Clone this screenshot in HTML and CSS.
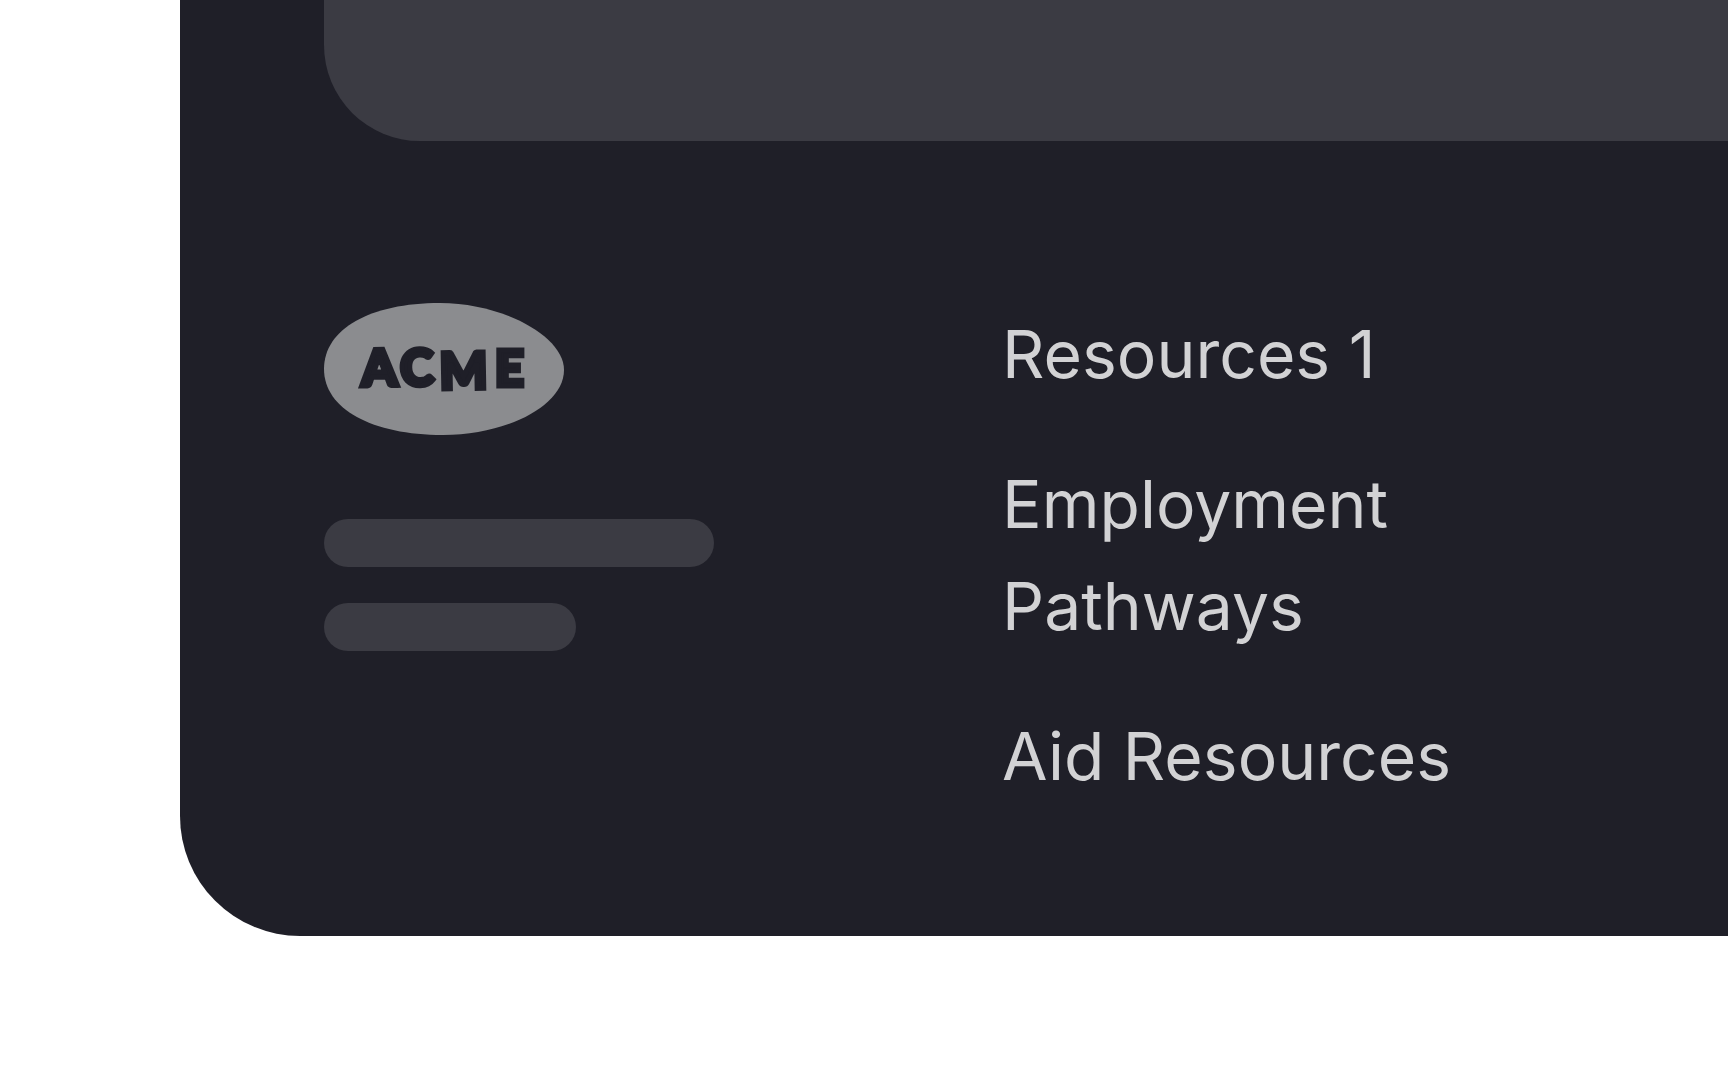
FILE: index.html
```html
<!DOCTYPE html>
<html lang="en">
<head>
<meta charset="utf-8">
<title>Acme resources</title>
<link rel="stylesheet" href="styles.css">
</head>
<body>
<main class="card">
  <div class="panel"></div>
  <footer class="footer">
    <div class="brand">
      <svg class="logo" viewBox="0 0 240 132" role="img" aria-label="Acme">
        <path class="logo-shape" d="M0 66C0 26 46 0 116 0C178 0 240 33 240 67C240 103 182 132 119 132C48 132 0 106 0 66Z"/>
        <text class="logo-text" x="38 77 116 171" y="83 83 86 83" rotate="-1 -2 -1 0">ACME</text>
      </svg>
      <div class="bars">
        <div class="bar"></div>
        <div class="bar bar-short"></div>
      </div>
    </div>
    <nav class="links" aria-label="Resources">
      <a class="link" href="#resources">Resources 1</a>
      <a class="link" href="#employment">Employment Pathways</a>
      <a class="link" href="#aid">Aid Resources</a>
    </nav>
  </footer>
</main>
</body>
</html>
```
FILE: styles.css
```css
body {
  margin: 0;
  background: #fff;
  font-family: Inter, "Liberation Sans", sans-serif;
}

.card {
  margin-left: 180px;
  border-bottom-left-radius: 120px;
  background: #1f1f28;
}

.panel {
  height: 141px;
  margin-left: 144px;
  border-bottom-left-radius: 96px;
  background: #3b3b43;
}

.footer {
  display: grid;
  grid-template-columns: 1fr 1fr;
  gap: 96px;
  padding: 162px 144px 129px;
}

.logo {
  display: block;
  width: 240px;
  height: 132px;
}

.logo-shape {
  fill: #8b8c8f;
}

.logo-text {
  fill: #1f1f28;
  stroke: #1f1f28;
  stroke-width: 5px;
  font: 900 50px Lato, sans-serif;
}

.bars {
  display: grid;
  gap: 36px;
  margin-top: 84px;
}

.bar {
  width: 390px;
  height: 48px;
  border-radius: 24px;
  background: #3b3b43;
}

.bar-short {
  width: 252px;
}

.links {
  display: flex;
  flex-direction: column;
  align-items: flex-start;
  gap: 48px;
}

.link {
  color: #d2d2d4;
  font-size: 66px;
  line-height: 102px;
  text-decoration: none;
}
```
